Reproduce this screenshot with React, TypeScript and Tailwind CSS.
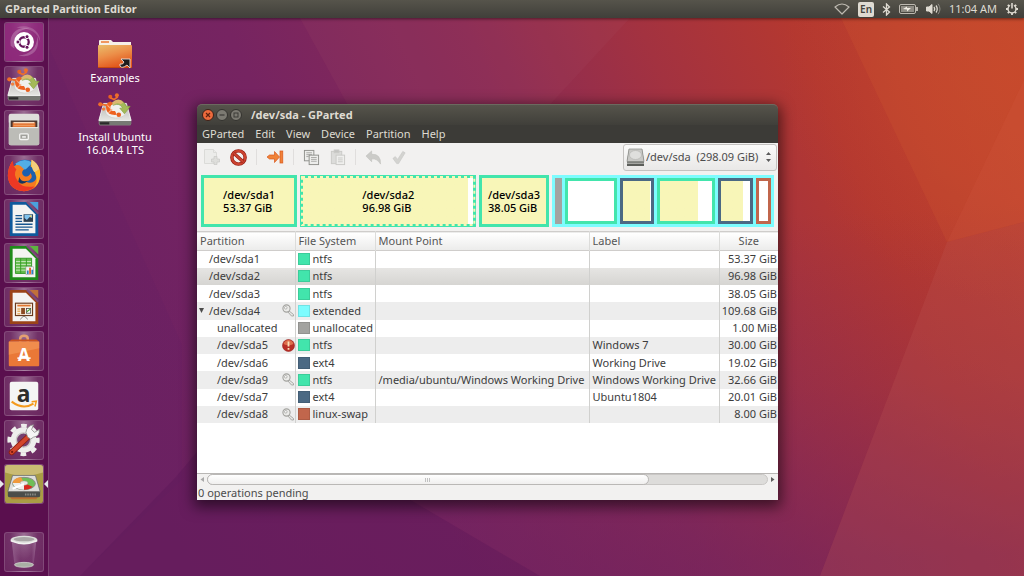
import type { ReactNode } from 'react';

interface PartitionRow {
  name: string;
  level: number;
  fs: string;
  mount?: string;
  label?: string;
  size: string;
  flag?: 'key' | 'warning';
  expanded?: boolean;
}

const partitions: PartitionRow[] = [
  { name: '/dev/sda1', level: 0, fs: 'ntfs', size: '53.37 GiB' },
  { name: '/dev/sda2', level: 0, fs: 'ntfs', size: '96.98 GiB' },
  { name: '/dev/sda3', level: 0, fs: 'ntfs', size: '38.05 GiB' },
  { name: '/dev/sda4', level: 0, fs: 'extended', size: '109.68 GiB', flag: 'key', expanded: true },
  { name: 'unallocated', level: 1, fs: 'unallocated', size: '1.00 MiB' },
  { name: '/dev/sda5', level: 1, fs: 'ntfs', label: 'Windows 7', size: '30.00 GiB', flag: 'warning' },
  { name: '/dev/sda6', level: 1, fs: 'ext4', label: 'Working Drive', size: '19.02 GiB' },
  {
    name: '/dev/sda9',
    level: 1,
    fs: 'ntfs',
    mount: '/media/ubuntu/Windows Working Drive',
    label: 'Windows Working Drive',
    size: '32.66 GiB',
    flag: 'key',
  },
  { name: '/dev/sda7', level: 1, fs: 'ext4', label: 'Ubuntu1804', size: '20.01 GiB' },
  { name: '/dev/sda8', level: 1, fs: 'linux-swap', size: '8.00 GiB', flag: 'key' },
];

const SELECTED = '/dev/sda2';

const swatches: Record<string, string> = {
  ntfs: 'bg-[#42e5ac]',
  extended: 'bg-[#7dfcfe]',
  unallocated: 'bg-[#a3a3a0]',
  ext4: 'bg-[#4b6983]',
  'linux-swap': 'bg-[#c1664c]',
};

const menus = ['GParted', 'Edit', 'View', 'Device', 'Partition', 'Help'];

/* ---------- Wallpaper ---------- */

function Wallpaper() {
  return (
    <svg className="absolute inset-0 h-full w-full" viewBox="0 0 1024 576" preserveAspectRatio="none" aria-hidden="true">
      <defs>
        <linearGradient id="wall" x1="0" y1="0.35" x2="1" y2="0.1">
          <stop offset="0" stopColor="#6b2163" />
          <stop offset="0.28" stopColor="#762461" />
          <stop offset="0.5" stopColor="#8a2b55" />
          <stop offset="0.66" stopColor="#a33240" />
          <stop offset="0.8" stopColor="#b43830" />
          <stop offset="1" stopColor="#be422d" />
        </linearGradient>
        <linearGradient id="shade" x1="0.35" y1="0" x2="0.42" y2="1">
          <stop offset="0.4" stopColor="#72235f" stopOpacity="0" />
          <stop offset="0.7" stopColor="#72235f" stopOpacity="0.22" />
          <stop offset="1" stopColor="#6f215f" stopOpacity="0.58" />
        </linearGradient>
        <radialGradient id="glow" gradientUnits="userSpaceOnUse" cx="1010" cy="70" r="230">
          <stop offset="0" stopColor="#cb4a29" stopOpacity="0.5" />
          <stop offset="0.5" stopColor="#cb4a2a" stopOpacity="0.3" />
          <stop offset="1" stopColor="#c0432e" stopOpacity="0" />
        </radialGradient>
      </defs>
      <rect width="1024" height="576" fill="url(#wall)" />
      <rect width="1024" height="576" fill="url(#shade)" />
      <rect width="1024" height="576" fill="url(#glow)" />
      <path d="M50 50L182 345V480L80 576H0V50Z" fill="#682264" fillOpacity="0.3" />
      <path d="M80 576L176 477L240 400L540 576Z" fill="#551456" fillOpacity="0.3" />
      <path d="M630 18L545 110L400 200L300 18Z" fill="#b0506a" fillOpacity="0.12" />
      <path d="M841 18L947 242L1024 80V18Z" fill="#d25a30" fillOpacity="0.22" />
      <path d="M1024 80L947 242L1024 222Z" fill="#d8603c" fillOpacity="0.28" />
      <path d="M947 242L820 576H1024V222Z" fill="#c05a58" fillOpacity="0.22" />
    </svg>
  );
}

/* ---------- Launcher icons (40x40 grid) ---------- */

function UbuntuDash() {
  return (
    <svg viewBox="0 0 40 40" className="h-full w-full">
      <rect width="40" height="40" rx="3" fill="#9b2a84" fillOpacity="0.7" />
      <path d="M6 24C4 10 14 3 26 6C14 6 8 14 10 27ZM14 34C28 38 38 28 34 14C34 26 26 34 14 34Z" fill="#fff" fillOpacity="0.22" />
      <path d="M12 5C24 0 38 8 37 20C35 10 26 5 12 5Z" fill="#fff" fillOpacity="0.18" />
      <circle cx="20" cy="20" r="10.5" fill="#fff" />
      <circle cx="20" cy="20" r="5" fill="none" stroke="#65135a" strokeWidth="2.4" />
      <g fill="#65135a" stroke="#fff" strokeWidth="1">
        <circle cx="13.6" cy="20" r="2.1" />
        <circle cx="23.2" cy="14.4" r="2.1" />
        <circle cx="23.2" cy="25.6" r="2.1" />
      </g>
    </svg>
  );
}

function InstallerDrive() {
  return (
    <svg viewBox="0 0 40 40" className="h-full w-full">
      <defs>
        <linearGradient id="driveTop" x1="0" y1="0" x2="0" y2="1">
          <stop offset="0" stopColor="#b4b4b0" />
          <stop offset="1" stopColor="#e6e6e3" />
        </linearGradient>
      </defs>
      <path d="M8 12H32L37 29V33Q37 35 36 35H4Q3 35 3 33V29Z" fill="#9d9e99" />
      <path d="M8 12H32L37 30H3Z" fill="url(#driveTop)" stroke="#fafafa" strokeWidth="0.8" />
      <path d="M3 30.5H37V33Q37 35 36 35H4Q3 35 3 33Z" fill="#777974" />
      <path d="M4 33H14" stroke="#2a2a2a" strokeWidth="2.4" />
      <ellipse cx="21" cy="20" rx="11" ry="7.500" fill="#f0f0ee" stroke="#c6c6c2" strokeWidth="0.6" />
      <path d="M15 10Q9 12 11 19Q13 25 22 24L20 20Q15 20 15 17Q15 13 19 12Z" fill="#ee6220" />
      <path d="M11 13L15 17M13 22L17 18" stroke="#f7b08a" strokeWidth="1.2" />
      <circle cx="15" cy="5" r="2.1" fill="#e8601f" />
      <circle cx="22" cy="3.5" r="2.1" fill="#ee6d2a" />
      <circle cx="4.500" cy="13" r="2.200" fill="#ee6d2a" />
      <circle cx="8" cy="18" r="1.800" fill="#f08040" />
      <circle cx="24" cy="24" r="2.400" fill="#e8601f" />
      <path d="M15 6L19 8L23 5M6 13L12 14" stroke="#ee6d2a" strokeWidth="1.800" fill="none" />
      <path d="M18 11Q27 5 32 15H36L30 23L25 17H28Q25 11 18 14Z" fill="#a4ba58" stroke="#7e9a3a" strokeWidth="0.6" />
      <path d="M17 11Q24 5 29 11L26 13Q22 10 18 14Z" fill="#dcb771" />
    </svg>
  );
}

function FileCabinet() {
  return (
    <svg viewBox="0 0 40 40" className="h-full w-full">
      <rect x="4" y="4" width="32" height="32" rx="2" fill="#cfcfca" />
      <path d="M4 12V5Q4 3 6 3H34Q36 3 36 5V12Z" fill="#dededb" />
      <rect x="6" y="10" width="28" height="8" fill="#4a3630" />
      <path d="M8 12H32V18H8Z" fill="#e07030" />
      <path d="M9 11.500H31V13H9Z" fill="#f8d9bc" />
      <path d="M9 14.500H31V16H9Z" fill="#f09a5c" />
      <path d="M4 17H36V34Q36 36 34 36H6Q4 36 4 34Z" fill="#bcbcb7" />
      <path d="M5 17.5H35" stroke="#f2f2f0" />
      <rect x="15.5" y="24" width="9" height="6" rx="1" fill="#a0a09b" stroke="#f5f5f3" strokeWidth="1.4" />
      <rect x="18" y="26.5" width="4" height="1.6" fill="#f5f5f3" />
    </svg>
  );
}

function Firefox() {
  return (
    <svg viewBox="0 0 40 40" className="h-full w-full">
      <circle cx="21" cy="18" r="14" fill="#1b5fae" />
      <path d="M11 8Q20 1 29 7L22 14L14 15Z" fill="#52aee6" />
      <path d="M8 5Q7 9 9 11Q13 8 17 11L20 14Q16 18 20 21Q25 23 27 18Q31 25 22 27Q31 31 34 21Q35 13 28 5Q37 9 37 20Q36 36 20 37Q4 36 3 21Q3 12 8 5Z" fill="#f47a20" />
      <path d="M8 5Q3 12 3 21Q4 36 20 37Q28 36 31 32Q18 34 14 27Q8 20 12 14Q9 12 8 5Z" fill="#ed3824" />
      <path d="M28 4Q38 10 37 21Q36 29 31 33Q35 26 32 19Q31 13 27 11Z" fill="#fbb52c" />
      <path d="M28 4Q34 7 36 14L31 17Q27 13 28 4Z" fill="#f5cf7c" />
      <path d="M15 22Q17 28 24 26Q18 32 14 27Z" fill="#16365f" />
    </svg>
  );
}

function OfficeDocument({ color, corner, children }: { color: string; corner: string; children: ReactNode }) {
  return (
    <svg viewBox="0 0 40 40" className="h-full w-full">
      <path d="M6 2H23L35 14V38H5V3Z" fill={color} />
      <path d="M8 5H22L32 15V35H8Z" fill="#f4f4f2" />
      <path d="M23 2L35 14.500" stroke="#7d4a78" strokeWidth="2" />
      <path d="M26 2H35V11Z" fill={corner} />
      {children}
    </svg>
  );
}

function WriterIcon() {
  return (
    <OfficeDocument color="#0f5a9c" corner="#4ba0dc">
      <path d="M11 16.5H18M11 19.5H18M11 22.5H18M11 25.5H29M11 28.5H29M11 31.5H25" stroke="#17568f" strokeWidth="1.4" />
      <rect x="19.500" y="15" width="10" height="8" fill="#2c3e50" />
      <path d="M20.500 15.500H28.500V19L26 18L23 21L20.500 19Z" fill="#7fc3ee" />
      <circle cx="27" cy="17" r="1" fill="#f5d35c" />
    </OfficeDocument>
  );
}

function CalcIcon() {
  return (
    <OfficeDocument color="#1f8a1a" corner="#5db53f">
      <rect x="11" y="15" width="17" height="16" fill="#63bb4c" />
      <path d="M11 18.500H28M11 21.500H28M11 24.500H28M11 27.500H28" stroke="#d7f0cf" strokeWidth="0.9" />
      <path d="M11 15H28V31H11ZM16.500 15V31M22.500 15V31" stroke="#349a26" strokeWidth="1" fill="none" />
      <rect x="22" y="24" width="8" height="8" fill="#f6f6f4" stroke="#999" strokeWidth="0.6" />
      <path d="M24 28V31.500M28.700 27V31.500" stroke="#2f7fc1" strokeWidth="1.8" />
      <path d="M26.400 25V31.500" stroke="#e8642a" strokeWidth="2" />
    </OfficeDocument>
  );
}

function ImpressIcon() {
  return (
    <OfficeDocument color="#9a4318" corner="#c0703a">
      <rect x="11" y="16" width="18" height="13" fill="#f7efe2" stroke="#6b3a1c" strokeWidth="1.2" />
      <path d="M13 18.500H27" stroke="#e2762e" strokeWidth="1.8" />
      <path d="M13 22H16M13 24.500H16M13 27H16" stroke="#e8b26c" strokeWidth="1.6" />
      <rect x="17" y="21" width="4" height="6.500" fill="#8a4a22" />
      <rect x="22.500" y="21.500" width="4.500" height="5" fill="#fff" stroke="#444" strokeWidth="0.8" />
      <path d="M23 25L25 23.500L27 22" stroke="#4aa02c" strokeWidth="1.200" />
      <path d="M16 33L19 30H21L24 33" stroke="#7c7c78" fill="none" />
    </OfficeDocument>
  );
}

function SoftwareIcon() {
  return (
    <svg viewBox="0 0 40 40" className="h-full w-full">
      <path d="M16 12V7Q16 4 20 4Q24 4 24 7V12" fill="none" stroke="#e6a071" strokeWidth="2.6" />
      <path d="M4 10L7 8H33L36 10Z" fill="#c9521f" />
      <rect x="4" y="10" width="32" height="26" rx="1" fill="#ea7837" />
      <path d="M4 10H36V17L4 24Z" fill="#f29557" fillOpacity="0.7" />
      <text x="20" y="31" textAnchor="middle" fontFamily="Noto Sans, sans-serif" fontWeight="700" fontSize="18" fill="#fff">
        A
      </text>
      <path d="M13 27.500H27" stroke="#fff" strokeWidth="1.600" />
    </svg>
  );
}

function AmazonIcon() {
  return (
    <svg viewBox="0 0 40 40" className="h-full w-full">
      <rect x="5" y="5" width="30" height="30" rx="2" fill="#f5f5f4" />
      <text x="19.500" y="26" textAnchor="middle" fontFamily="Noto Sans, sans-serif" fontWeight="700" fontSize="24" fill="#2e2e2c">
        a
      </text>
      <path d="M7 26Q19 35 30 28" fill="none" stroke="#f49a1c" strokeWidth="2.200" />
      <path d="M28 26L33 25.500L31.500 31" fill="none" stroke="#f49a1c" strokeWidth="1.600" />
    </svg>
  );
}

function SettingsIcon() {
  return (
    <svg viewBox="0 0 40 40" className="h-full w-full">
      <circle cx="19.500" cy="20" r="13.500" fill="#eeeeec" />
      <circle cx="19.500" cy="20" r="15" fill="none" stroke="#eeeeec" strokeWidth="4" strokeDasharray="6 5.780" strokeDashoffset="3" />
      <circle cx="19.500" cy="20" r="7.500" fill="#77406f" stroke="#c9c9c5" strokeWidth="1.500" />
      <path d="M7 33L25 16" stroke="#8e1f12" strokeWidth="6" strokeLinecap="round" />
      <path d="M7 33L25 16" stroke="#d2462b" strokeWidth="4.200" strokeLinecap="round" />
      <path d="M24 17L22 12Q23 5 30 4L28 9L31 12L36 9Q37 16 30 17L27 19Z" fill="#f6f6f5" stroke="#888a85" strokeWidth="0.800" />
      <circle cx="7.500" cy="32.500" r="1.200" fill="#7a1a10" />
    </svg>
  );
}

function GPartedIcon() {
  return (
    <svg viewBox="0 0 40 40" className="h-full w-full">
      <rect width="40" height="40" rx="3" fill="#a99d45" />
      <path d="M0 3Q0 0 3 0H37Q40 0 40 3V8Q20 15 0 8Z" fill="#d9c887" fillOpacity="0.7" />
      <path d="M5 33H35L33 36H7Z" fill="#c8552a" fillOpacity="0.6" />
      <path d="M8 11H32L37 27V32Q37 34 35 34H5Q3 34 3 32V27Z" fill="#4b4d4a" />
      <path d="M8 11H32L37 28H3Z" fill="#dededb" stroke="#73746f" strokeWidth="0.800" />
      <ellipse cx="20" cy="19.500" rx="12" ry="6.500" fill="#6fbe58" stroke="#8a8b86" strokeWidth="1" />
      <path d="M20 19L8 19Q9 13.500 17 13Z" fill="#f09a3c" />
      <path d="M20 19L29 23Q26 26 20 26Z" fill="#d9281e" />
      <path d="M20 19V26Q10 26 8 19Z" fill="#eeeeec" />
      <ellipse cx="20" cy="19" rx="4" ry="2.200" fill="#e8e8e5" stroke="#aaa" strokeWidth="0.500" />
      <path d="M8 25L20 20" stroke="#fff" strokeWidth="2" />
      <path d="M21 31H33" stroke="#888a85" strokeWidth="2" strokeDasharray="1.500 1" />
    </svg>
  );
}

function TrashIcon() {
  return (
    <svg viewBox="0 0 40 40" className="h-full w-full">
      <defs>
        <linearGradient id="glass" x1="0" y1="0" x2="1" y2="0">
          <stop offset="0" stopColor="#e8d8e8" stopOpacity="0.3" />
          <stop offset="0.35" stopColor="#c9a0c4" stopOpacity="0.05" />
          <stop offset="0.8" stopColor="#c9a0c4" stopOpacity="0.05" />
          <stop offset="1" stopColor="#e8d8e8" stopOpacity="0.35" />
        </linearGradient>
      </defs>
      <path d="M7 8H33L30 34Q20 38 10 34Z" fill="url(#glass)" />
      <ellipse cx="20" cy="33.500" rx="10" ry="2.600" fill="#a9b0a4" stroke="#d5d8d2" strokeWidth="0.800" />
      <ellipse cx="20" cy="7" rx="14" ry="4" fill="#dcdcda" />
      <ellipse cx="20" cy="6.500" rx="11" ry="2.200" fill="#a9a6a6" />
      <path d="M6 7Q20 14 34 7V9Q20 15 6 9Z" fill="#f2f2f1" />
    </svg>
  );
}

const launcherItems = [
  { name: 'Search your computer', icon: <UbuntuDash /> },
  { name: 'Install Ubuntu', icon: <InstallerDrive /> },
  { name: 'Files', icon: <FileCabinet /> },
  { name: 'Firefox', icon: <Firefox /> },
  { name: 'LibreOffice Writer', icon: <WriterIcon /> },
  { name: 'LibreOffice Calc', icon: <CalcIcon /> },
  { name: 'LibreOffice Impress', icon: <ImpressIcon /> },
  { name: 'Ubuntu Software', icon: <SoftwareIcon /> },
  { name: 'Amazon', icon: <AmazonIcon /> },
  { name: 'System Settings', icon: <SettingsIcon /> },
  { name: 'GParted', icon: <GPartedIcon />, active: true },
];

function LauncherTile({ name, icon, active }: { name: string; icon: ReactNode; active?: boolean }) {
  return (
    <div className="relative flex w-full justify-center">
      <button
        aria-label={name}
        className="h-10 w-10 rounded-[3px] border border-white/15 bg-radial-[at_50%_0%] from-white/40 via-white/15 to-white/10"
      >
        {icon}
      </button>
      {active && (
        <>
          <span className="absolute top-4 left-0 border-y-4 border-l-4 border-y-transparent border-l-gray-200" />
          <span className="absolute top-4 right-0 border-y-4 border-r-4 border-y-transparent border-r-gray-200" />
        </>
      )}
    </div>
  );
}

/* ---------- Top panel ---------- */

function TopPanel() {
  return (
    <header className="relative z-10 flex h-[18px] items-center justify-between bg-linear-to-b from-[#56544b] to-[#403f3a] px-[5px] text-[#dfdbd2] shadow-[0_1px_3px_rgba(0,0,0,0.5)]">
      <h1 className="font-bold">GParted Partition Editor</h1>
      <div className="flex items-center gap-2">
        <svg width="16" height="12" viewBox="0 0 16 12" fill="none" stroke="#bdb9b0" strokeWidth="1.2">
          <path d="M1 4Q8 -2 15 4L8 11Z" strokeLinejoin="round" />
        </svg>
        <span className="rounded-[2px] bg-[#dfdbd2] px-[2px] text-[10px] leading-[15px] font-semibold text-[#45443e]">En</span>
        <svg width="9" height="13" viewBox="0 0 9 13" fill="none" stroke="#dfdbd2" strokeWidth="1.300">
          <path d="M1 3.500L7.500 9L4.500 12V1L7.500 4L1 9.500" />
        </svg>
        <svg width="19" height="10" viewBox="0 0 19 10">
          <rect x="0.500" y="0.500" width="16" height="9" rx="1.500" fill="none" stroke="#bdb9b0" />
          <rect x="2" y="2" width="13" height="6" fill="#8f8c84" />
          <rect x="17" y="3" width="2" height="4" fill="#bdb9b0" />
          <path d="M4 5L8 2.500V4H12L8 7.500V5.500Z" fill="#f0ede4" />
        </svg>
        <svg width="15" height="12" viewBox="0 0 15 12" fill="none" stroke="#dfdbd2">
          <path d="M0.500 4H3L6 1.500V10.500L3 8H0.500Z" fill="#dfdbd2" />
          <path d="M8 4Q9.500 6 8 8M10 2.500Q12.500 6 10 9.500" strokeWidth="1.300" />
          <path d="M12 0.800Q16 6 12 11.200" stroke="#8f8c84" />
        </svg>
        <time>11:04 AM</time>
        <svg width="14" height="14" viewBox="0 0 14 14" fill="none" stroke="#dfdbd2">
          <circle cx="7" cy="7" r="4" strokeWidth="1.500" />
          <path d="M11 7H13M1 7H3M7 11V13M9.800 9.800L11.200 11.200M4.200 9.800L2.800 11.200M9.800 4.200L11.200 2.800M4.200 4.200L2.800 2.800" strokeWidth="1.800" />
          <path d="M7 1V6.500" stroke="#4a4841" strokeWidth="3.600" />
          <path d="M7 1V6.500" strokeWidth="1.600" />
        </svg>
      </div>
    </header>
  );
}

/* ---------- Desktop shortcuts ---------- */

function FolderShortcut() {
  return (
    <svg width="36" height="32" viewBox="0 0 36 32">
      <defs>
        <linearGradient id="folder" x1="0" y1="0" x2="0.4" y2="1">
          <stop offset="0" stopColor="#e9bd6c" />
          <stop offset="0.5" stopColor="#ec8e48" />
          <stop offset="1" stopColor="#e2571c" />
        </linearGradient>
      </defs>
      <path d="M2 2Q2 1 3 1H14L16 3H34V8H2Z" fill="#f6efe6" />
      <path d="M4 3H12" stroke="#ee7a33" strokeWidth="1.500" />
      <rect x="1" y="6" width="34" height="23" rx="1" fill="url(#folder)" />
      <path d="M1 28.500H35" stroke="#c4480f" />
      <path d="M23 27Q25 30 30 26L33 29V20H24L27 23Q26 26 23 25Z" fill="#1c1c1c" stroke="#f1f1f1" strokeWidth="0.800" />
    </svg>
  );
}

function DesktopShortcuts() {
  return (
    <div className="flex w-[132px] flex-col items-center pt-[21px] text-center leading-[13px] text-white [text-shadow:1px_1px_1px_rgba(0,0,0,0.8)]">
      <button className="flex flex-col items-center">
        <FolderShortcut />
        Examples
      </button>
      <button className="mt-2 flex flex-col items-center">
        <span className="h-[38px] w-[38px]">
          <InstallerDrive />
        </span>
        <span className="w-20">Install Ubuntu 16.04.4 LTS</span>
      </button>
    </div>
  );
}

/* ---------- GParted window ---------- */

function KeyIcon() {
  return (
    <svg width="13" height="13" viewBox="0 0 13 13" fill="none" className="shrink-0">
      <path d="M6.500 6.500L11.500 10.500V12H9.500L5.500 7.500Z" fill="#e8e8e6" stroke="#a3a39f" strokeWidth="0.900" />
      <circle cx="4.500" cy="4.500" r="3.600" fill="#ececea" stroke="#a3a39f" strokeWidth="1.100" />
      <circle cx="3.800" cy="3.800" r="1.300" fill="#fff" stroke="#a3a39f" strokeWidth="0.800" />
    </svg>
  );
}

function WarningIcon() {
  return (
    <svg width="13" height="13" viewBox="0 0 13 13" className="shrink-0">
      <circle cx="6.500" cy="6.500" r="6" fill="#b82e26" stroke="#9a2320" strokeWidth="0.600" />
      <path d="M1.500 5Q3 1 6.500 1Q10 1 11.500 5Q6.500 7.500 1.500 5Z" fill="#dd6f4c" />
      <path d="M6.500 2.500V7.500M6.500 9V10.800" stroke="#fbe0b8" strokeWidth="1.800" />
    </svg>
  );
}

function TitleBar() {
  return (
    <div className="flex h-[21px] items-center gap-[2px] rounded-t-[5px] border-t border-[#6b695f] bg-linear-to-b from-[#56544b] to-[#403f3a] pl-[5px]">
      <button aria-label="Close" className="flex h-3 w-3 items-center justify-center rounded-full border border-[#3a2018] bg-[#ee6a3c]">
        <svg width="6" height="6" viewBox="0 0 6 6" stroke="#5e2210" strokeWidth="1.200">
          <path d="M1 1L5 5M5 1L1 5" />
        </svg>
      </button>
      <button aria-label="Minimize" className="flex h-3 w-3 items-center justify-center rounded-full border border-[#34332f] bg-[#7c7a72]">
        <svg width="6" height="6" viewBox="0 0 6 6" stroke="#3b3a36" strokeWidth="1.200">
          <path d="M0.500 3H5.500" />
        </svg>
      </button>
      <button aria-label="Maximize" className="flex h-3 w-3 items-center justify-center rounded-full border border-[#34332f] bg-[#7c7a72]">
        <svg width="6" height="6" viewBox="0 0 6 6" fill="none" stroke="#3b3a36">
          <rect x="1" y="1" width="4" height="4" />
        </svg>
      </button>
      <h2 className="ml-[7px] font-bold text-[#dfdbd2]">/dev/sda - GParted</h2>
    </div>
  );
}

function ToolSeparator() {
  return <span className="h-4 w-px bg-[#e0dedd]" />;
}

function Toolbar() {
  return (
    <div className="flex h-7 items-center justify-between pr-px pl-[6px]">
      <div className="flex items-center gap-[9px]">
        <button aria-label="New" disabled>
          <svg width="18" height="18" viewBox="0 0 18 18" fill="#ececea" stroke="#dbdbd8">
            <path d="M1.500 1.500H10.500L13.500 4.500V15.500H1.500Z" />
            <path d="M10.500 1.500V4.500H13.500" />
            <path d="M11 8.500H14V11H16.500V14H14V16.500H11V14H8.500V11H11Z" fill="#dededb" stroke="#c9c9c6" strokeWidth="0.700" />
          </svg>
        </button>
        <button aria-label="Delete">
          <svg width="17" height="17" viewBox="0 0 18 18" fill="none">
            <circle cx="9" cy="9" r="7" stroke="#8f1b12" strokeWidth="3.600" />
            <circle cx="9" cy="9" r="7" stroke="#cc4330" strokeWidth="2.400" />
            <path d="M4 4.500L14 13.500" stroke="#8f1b12" strokeWidth="3.400" />
            <path d="M4 4.500L14 13.500" stroke="#cc4330" strokeWidth="2.400" />
          </svg>
        </button>
        <ToolSeparator />
        <button aria-label="Resize/Move">
          <svg width="18" height="16" viewBox="0 0 18 16" fill="#f08238" stroke="#d9571c" strokeWidth="0.700">
            <path d="M1 8L3.500 6H8.500V2.500L13.500 8L8.500 13.500V10H3.500Z" />
            <rect x="14" y="2" width="2.800" height="12" />
          </svg>
        </button>
        <ToolSeparator />
        <button aria-label="Copy">
          <svg width="17" height="17" viewBox="0 0 18 18" fill="#ededeb" stroke="#8f908c">
            <rect x="1.500" y="1.500" width="10" height="11" />
            <path d="M3.500 4H9.500M3.500 6H9.500M3.500 8H6" stroke="#a8a8a5" />
            <rect x="6.500" y="6.500" width="10" height="10" />
            <path d="M8.500 9H14.500M8.500 11H14.500M8.500 13H14.500" stroke="#a8a8a5" />
          </svg>
        </button>
        <button aria-label="Paste" disabled>
          <svg width="17" height="17" viewBox="0 0 18 18" fill="#dcdcda" stroke="#cacac7">
            <rect x="2.500" y="2.500" width="11" height="13" />
            <rect x="5.500" y="1" width="5" height="3" fill="#c4c4c1" />
            <rect x="7.500" y="6.500" width="9" height="10" fill="#efefed" />
            <path d="M9.500 9.500H14.500M9.500 11.500H14.500M9.500 13.500H14.500" />
          </svg>
        </button>
        <ToolSeparator />
        <button aria-label="Undo" disabled>
          <svg width="17" height="15" viewBox="0 0 18 16">
            <path d="M1 6.500L7 1V4.500Q17 4 16.500 15Q13 9 7 9.500V12.500Z" fill="#cbcbc8" stroke="#bfbfbc" strokeWidth="0.600" />
          </svg>
        </button>
        <button aria-label="Apply" disabled>
          <svg width="17" height="15" viewBox="0 0 18 16">
            <path d="M2 9L4.500 7L7 10L12.500 1.500L15 3L8 14.500H6Z" fill="#d3d3d0" stroke="#c5c5c2" strokeWidth="0.600" />
          </svg>
        </button>
      </div>

      <label className="flex h-[27px] items-center rounded-[3px] border border-[#c4c2c0] bg-linear-to-b from-[#fbfbfa] to-[#e9e8e7] pr-[5px] pl-[2px]">
        <svg width="19" height="19" viewBox="0 0 19 19" aria-label="Disk">
          <path d="M3 1H16L18 13V18H1V13Z" fill="#5c5e5a" />
          <path d="M3 1H16L18 13.500H1Z" fill="#c9c9c6" stroke="#8b8c88" strokeWidth="0.700" />
          <ellipse cx="9.500" cy="7" rx="6" ry="4.500" fill="#dfdfdd" stroke="#b2b2af" strokeWidth="0.600" />
          <path d="M1 14.500H18V16H1Z" fill="#a5a6a2" />
        </svg>
        <select className="w-[121px] appearance-none bg-transparent pl-px whitespace-pre text-[#4c4c4c] outline-none">
          <option>/dev/sda&nbsp; (298.09 GiB)</option>
        </select>
        <svg width="5" height="10" viewBox="0 0 5 10" fill="#5c5c5c">
          <path d="M0 3L2.500 0L5 3ZM0 7L2.500 10L5 7Z" />
        </svg>
      </label>
    </div>
  );
}

function SelectionMarquee() {
  return (
    <svg className="absolute -inset-px h-[calc(100%+2px)] w-[calc(100%+2px)] overflow-visible" aria-hidden="true">
      <rect width="100%" height="100%" fill="none" stroke="#f8f6b8" strokeWidth="2" strokeDasharray="3 3" />
    </svg>
  );
}

function DiskMap() {
  return (
    <div className="grid h-[60px] grid-cols-[96fr_176fr_69fr_222fr] gap-[3px] p-1 leading-[13px] font-medium text-black">
      <div className="flex items-center justify-center border-[3px] border-[#42e5ac] bg-[#f8f6b8]">
        <p>
          /dev/sda1
          <br />
          53.37 GiB
        </p>
      </div>
      <div className="relative flex items-center justify-center border-[3px] border-[#42e5ac] bg-linear-to-r from-[#f8f6b8] from-97% to-white to-97%">
        <SelectionMarquee />
        <p>
          /dev/sda2
          <br />
          96.98 GiB
        </p>
      </div>
      <div className="flex items-center justify-center border-[3px] border-[#42e5ac] bg-[#f8f6b8]">
        <p>
          /dev/sda3
          <br />
          38.05 GiB
        </p>
      </div>
      <div className="grid grid-cols-[7fr_53fr_34fr_58fr_35fr_15fr] gap-[3px] bg-[#7dfcfe] p-[3px]">
        <div className="bg-[#a3a3a0]" />
        <div className="border-[3px] border-[#42e5ac] bg-white" />
        <div className="border-[3px] border-[#4b6983] bg-linear-to-r from-[#f8f6b8] from-95% to-white to-95%" />
        <div className="border-[3px] border-[#42e5ac] bg-linear-to-r from-[#f8f6b8] from-74% to-white to-74%" />
        <div className="border-[3px] border-[#4b6983] bg-linear-to-r from-[#f8f6b8] from-75% to-white to-75%" />
        <div className="border-[3px] border-[#c1664c] bg-white" />
      </div>
    </div>
  );
}

function PartitionTable() {
  return (
    <table className="h-[192px] w-full table-fixed border-collapse text-left leading-4 text-[#3c3c3c]">
      <colgroup>
        <col className="w-[98px]" />
        <col className="w-[80px]" />
        <col className="w-[214px]" />
        <col className="w-[130px]" />
        <col />
      </colgroup>
      <thead>
        <tr className="h-[19px] border-y border-[#cfcdcb] bg-linear-to-b from-white to-[#ececeb] text-[#555]">
          <th className="border-r border-[#dcdcda] p-0 pl-[3px] font-normal">Partition</th>
          <th className="border-r border-[#dcdcda] p-0 pl-[3px] font-normal">File System</th>
          <th className="border-r border-[#dcdcda] p-0 pl-[3px] font-normal">Mount Point</th>
          <th className="border-r border-[#dcdcda] p-0 pl-[3px] font-normal">Label</th>
          <th className="p-0 text-center font-normal">Size</th>
        </tr>
      </thead>
      <tbody>
        {partitions.map((row) => (
          <tr
            key={row.name}
            className={`h-[17px] ${
              row.name === SELECTED ? 'bg-linear-to-b from-[#e6e5e3] to-[#d6d5d2]' : 'odd:bg-white even:bg-[#ededed]'
            }`}
          >
            <td className="border-r border-[#d0d0ce] p-0">
              <div className={row.level ? 'flex items-center pl-2' : 'flex items-center'}>
                <span className="w-3 pl-[2px]">
                  {row.expanded && (
                    <svg width="5" height="5" viewBox="0 0 5 5" fill="#4c4c4c">
                      <path d="M0 0H5L2.500 5Z" />
                    </svg>
                  )}
                </span>
                <span className="flex-1">{row.name}</span>
                {row.flag === 'key' && <KeyIcon />}
                {row.flag === 'warning' && <WarningIcon />}
              </div>
            </td>
            <td className="border-r border-[#d0d0ce] p-0">
              <div className="flex items-center gap-[3px] pl-[2px]">
                <span className={`h-3 w-3 shrink-0 border border-black/10 ${swatches[row.fs]}`} />
                {row.fs}
              </div>
            </td>
            <td className="border-r border-[#d0d0ce] p-0 pl-[3px] whitespace-nowrap">{row.mount}</td>
            <td className="border-r border-[#d0d0ce] p-0 pl-[3px] whitespace-nowrap">{row.label}</td>
            <td className="p-0 pr-px text-right whitespace-nowrap">{row.size}</td>
          </tr>
        ))}
      </tbody>
    </table>
  );
}

function HorizontalScrollbar() {
  return (
    <div className="flex h-3 items-center border-t border-[#b9b7b5] bg-[#f2f1f0]">
      <button aria-label="Scroll left" className="flex w-[10px] justify-center">
        <svg width="4" height="5" viewBox="0 0 4 5" fill="#a9a9a9">
          <path d="M4 0V5L0.500 2.500Z" />
        </svg>
      </button>
      <div className="flex h-full flex-1 rounded-full border border-[#c9c7c5] bg-[#dddcda]">
        <div className="-my-px -ml-px flex w-[79%] items-center justify-center gap-px rounded-full border border-[#bab8b6] bg-linear-to-b from-white to-[#f0efee]">
          <span className="h-1 w-px bg-[#c2c2c2]" />
          <span className="h-1 w-px bg-[#c2c2c2]" />
          <span className="h-1 w-px bg-[#c2c2c2]" />
        </div>
      </div>
      <button aria-label="Scroll right" className="flex w-[10px] justify-center">
        <svg width="4" height="5" viewBox="0 0 4 5" fill="#5c5c5c">
          <path d="M0 0V5L3.500 2.500Z" />
        </svg>
      </button>
    </div>
  );
}

function GPartedWindow() {
  return (
    <section className="absolute top-[86px] left-[148px] w-[581px] rounded-t-[5px] shadow-[0_4px_14px_3px_rgba(0,0,0,0.55)]">
      <TitleBar />
      <nav className="flex h-[18px] items-center gap-[11px] bg-[#3c3b37] pl-[5px] text-[#dfdbd2]">
        {menus.map((menu) => (
          <button key={menu}>{menu}</button>
        ))}
      </nav>
      <div className="bg-[#f2f1f0]">
        <Toolbar />
        <DiskMap />
        <div className="bg-white pb-[50px]">
          <PartitionTable />
        </div>
        <HorizontalScrollbar />
        <footer className="pl-px leading-[15px] text-[#4c4c4c]">0 operations pending</footer>
      </div>
    </section>
  );
}

export default function App() {
  return (
    <div className="relative flex h-screen flex-col overflow-hidden bg-[#6b2163] font-['Noto_Sans',sans-serif] text-[11px]">
      <Wallpaper />
      <TopPanel />
      <div className="relative flex min-h-0 flex-1">
        <nav className="flex w-[49px] flex-col border-r border-white/20 bg-[#5a0f4e] pt-1 pb-1">
          <div className="flex flex-1 flex-col justify-between">
            {launcherItems.map((item) => (
              <LauncherTile key={item.name} {...item} />
            ))}
          </div>
          <div className="mt-7">
            <LauncherTile name="Trash" icon={<TrashIcon />} />
          </div>
        </nav>
        <main className="relative flex-1">
          <DesktopShortcuts />
          <GPartedWindow />
        </main>
      </div>
    </div>
  );
}
